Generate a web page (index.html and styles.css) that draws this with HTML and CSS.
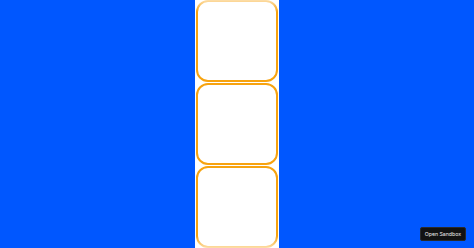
FILE: index.html
```html
<!DOCTYPE html>
<html>
<head>
<meta charset="utf-8">
<link rel="stylesheet" href="styles.css">
</head>
<body>
<main class="stage">
  <div class="column">
    <div class="list">
      <div class="card"></div>
      <div class="card"></div>
      <div class="card"></div>
    </div>
  </div>
</main>
<a class="sandbox-btn" href="#">Open Sandbox</a>
</body>
</html>
```
FILE: styles.css
```css
html, body {
  margin: 0;
  padding: 0;
  height: 100%;
}
body {
  background: #0057ff;
  font-family: Inter, "Noto Sans", sans-serif;
  overflow: hidden;
}
.stage {
  height: 248px;
  display: flex;
  justify-content: center;
}
.column {
  width: 84px;
  background: #ffffff;
  height: 100%;
}
.list {
  display: flex;
  flex-direction: column;
  gap: 1px;
  padding: 0 1px;
  -webkit-mask-image: linear-gradient(to bottom, rgba(0,0,0,0.35) 0, #000 12px, #000 calc(100% - 12px), rgba(0,0,0,0.35) 100%);
  mask-image: linear-gradient(to bottom, rgba(0,0,0,0.35) 0, #000 12px, #000 calc(100% - 12px), rgba(0,0,0,0.35) 100%);
}
.card {
  height: 82px;
  box-sizing: border-box;
  border: 2.5px solid #f7a30f;
  border-radius: 12px;
  background: #ffffff;
}
.sandbox-btn {
  position: fixed;
  right: 8px;
  bottom: 7px;
  background: #121212;
  color: #f2f2f2;
  font-size: 5.2px;
  line-height: 12px;
  padding: 0 4px;
  border-radius: 2px;
  text-decoration: none;
  border: 1px solid #2a2a2a;
}
```
